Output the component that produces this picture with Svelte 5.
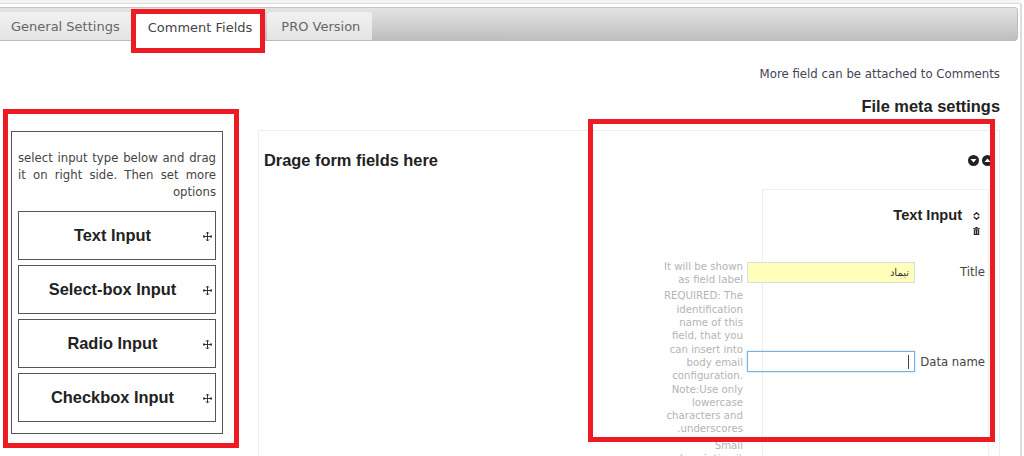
<script>
	const inputTypes = ['Text Input', 'Select-box Input', 'Radio Input', 'Checkbox Input']
</script>

<div class="page">
	<div class="frame">
		<div class="tabbar">
			<span class="tab">General Settings</span>
			<span class="tab active">Comment Fields</span>
			<span class="tab last">PRO Version</span>
		</div>

		<div class="columns">
			<div class="palette">
				<p class="palette-text">select input type below and drag it on right side. Then set more options</p>
				{#each inputTypes as type}
					<div class="type-box">
						<span class="type-name">{type}</span>
						<svg class="move" width="9" height="9" viewBox="0 0 9 9"><path d="M4.5 0v9M0 4.5h9M3 1.5L4.5 0 6 1.5M3 7.5L4.5 9 6 7.5M1.5 3L0 4.5 1.5 6M7.5 3L9 4.5 7.5 6" fill="none" stroke="#333" /></svg>
					</div>
				{/each}
			</div>

			<div class="main">
				<p class="intro">More field can be attached to Comments</p>
				<h2 class="meta-title">File meta settings</h2>

				<div class="drop">
					<div class="drop-head">
						<span class="drop-title">Drage form fields here</span>
						<span class="round-icons">
							<svg width="11" height="11" viewBox="0 0 11 11"><circle cx="5.5" cy="5.5" r="5.5" fill="#222" /><path d="M2.5 4h6L5.5 7.5z" fill="#fff" /></svg>
							<svg width="11" height="11" viewBox="0 0 11 11"><circle cx="5.5" cy="5.5" r="5.5" fill="#222" /><path d="M2.5 7h6L5.5 3.5z" fill="#fff" /></svg>
						</span>
					</div>
					<div class="field-card">
						<div class="card-head">
							<span class="card-title">Text Input</span>
							<span class="card-icons">
								<svg width="7" height="8" viewBox="0 0 7 8"><path d="M.7 3.2L3.5.8l2.8 2.4M.7 4.8l2.8 2.4 2.8-2.4" fill="none" stroke="#222" stroke-width="1.4" /></svg>
								<svg width="7" height="8" viewBox="0 0 7 8"><path d="M0 1h7v.8H0zM2.3 0h2.4v1H2.3z" fill="#222" /><path d="M.8 2.3h5.4V8H.8z" fill="#222" /><path d="M2.4 3.2v3.8M4.6 3.2v3.8" stroke="#fff" stroke-width=".7" /></svg>
							</span>
						</div>
						<div class="form-rows">
							<div class="hint">It will be shown as field label</div>
							<input class="text-field filled" dir="rtl" value="تیماد" aria-label="Title" />
							<div class="label">Title</div>

							<div class="hint">REQUIRED: The identification name of this field, that you can insert into body email configuration. Note:Use only lowercase characters and underscores.</div>
							<div class="text-field focused"><span class="caret"></span></div>
							<div class="label second">Data name</div>

							<div class="hint">Small description it</div>
						</div>
					</div>
				</div>
			</div>
		</div>
	</div>

	<!-- the red annotation boxes drawn over the screenshot -->
	<div class="mark mark-tab"></div>
	<div class="mark mark-palette"></div>
	<div class="mark mark-form"></div>
</div>

<style>
	:global(body) {
		margin: 0;
		background: #fff;
	}

	.page {
		position: relative;
		width: 1024px;
		height: 456px;
		overflow: hidden;
		font-family: 'DejaVu Sans', Verdana, sans-serif;
		font-size: 11px;
		color: #333;
	}

	.frame {
		box-sizing: border-box;
		width: 1022px;
		height: 460px;
		margin-top: 3px;
		padding-top: 3px;
		border-top: 1px solid #ddd;
		border-right: 2px solid #ddd;
		border-top-right-radius: 3px;
		box-shadow: 0 -3px 0 #f4f4f4;
		background: #fff;
	}

	.tabbar {
		box-sizing: border-box;
		display: flex;
		align-items: flex-end;
		gap: 2px;
		width: 1018px;
		height: 34px;
		border-top: 1px solid #c4c4c4;
		border-right: 1px solid #bbb;
		border-bottom: 1px solid #bbb;
		border-radius: 0 4px 4px 0;
		background: linear-gradient(to bottom, #e4e4e4, #bebebe);
	}

	.tab {
		height: 28px;
		line-height: 30px;
		padding: 0 13px;
		font-size: 13px;
		color: #666;
		background: linear-gradient(to bottom, #f1f1f1, #e4e4e4);
		border-radius: 3px 3px 0 0;
		white-space: nowrap;
	}

	.tab:first-child {
		margin-left: -2px;
	}

	.tab.active {
		background: #fff;
		color: #444;
		height: 29px;
		margin-bottom: -1px;
		line-height: 32px;
	}

	.tab.last {
		padding: 0 12px 0 14px;
	}

	.columns {
		display: grid;
		grid-template-columns: 212px 742px;
		column-gap: 35px;
		padding-left: 11px;
	}

	.palette {
		box-sizing: border-box;
		height: 303px;
		margin-top: 90px;
		padding: 0 6px;
		border: 1px solid #555;
	}

	.palette-text {
		margin: 18px 0 10px;
		font-size: 11.7px;
		line-height: 17px;
		text-align: justify;
		direction: rtl;
		color: #444;
	}

	.type-box {
		position: relative;
		box-sizing: border-box;
		height: 49px;
		margin-top: 5px;
		border: 1px solid #555;
		text-align: center;
		font-family: 'Liberation Sans', Arial, sans-serif;
		font-size: 16.4px;
		font-weight: bold;
		line-height: 47px;
		color: #222;
	}

	.type-name {
		margin-right: 9px;
	}

	.move {
		position: absolute;
		right: 3px;
		top: 20px;
	}

	.main {
		padding-top: 27px;
	}

	.intro {
		margin: 0;
		text-align: right;
		font-size: 11.75px;
		line-height: 13px;
		color: #445;
	}

	.meta-title {
		margin: 16px 0 15px;
		text-align: right;
		font-family: 'Liberation Sans', Arial, sans-serif;
		font-size: 16.4px;
		line-height: 18px;
		font-weight: bold;
		color: #222;
	}

	.drop {
		height: 400px;
		padding: 0 10px 0 5px;
		border: 1px solid #eee;
	}

	.drop-head {
		display: flex;
		justify-content: space-between;
		align-items: center;
		height: 58px;
	}

	.drop-title {
		font-family: 'Liberation Sans', Arial, sans-serif;
		font-size: 16.4px;
		font-weight: bold;
		color: #222;
	}

	.round-icons {
		display: flex;
		gap: 3px;
		margin-right: -4px;
	}

	.round-icons svg,
	.card-icons svg {
		display: block;
	}

	.field-card {
		height: 300px;
		margin-left: 498px;
		border: 1px solid #eee;
	}

	.card-head {
		box-sizing: border-box;
		display: flex;
		justify-content: flex-end;
		gap: 11px;
		height: 69.5px;
		padding: 16px 8px 0 0;
	}

	.card-title {
		font-family: 'Liberation Sans', Arial, sans-serif;
		font-size: 14.6px;
		font-weight: bold;
		line-height: 18px;
		color: #222;
	}

	.card-icons {
		display: flex;
		flex-direction: column;
		gap: 7px;
		padding-top: 6px;
	}

	.form-rows {
		display: grid;
		grid-template-columns: 85px 168px 1fr;
		column-gap: 4px;
		align-items: start;
		margin-left: -105px;
		padding-right: 3px;
	}

	.hint {
		padding-bottom: 3.4px;
		direction: rtl;
		font-size: 10.2px;
		line-height: 13.3px;
		color: #b4b4b4;
	}

	.text-field {
		position: relative;
		box-sizing: border-box;
		width: 168px;
		height: 21px;
		padding: 0 5px;
		border: 1px solid #ddd;
		font-family: 'DejaVu Sans', sans-serif;
		font-size: 10px;
	}

	.filled {
		margin: 2.5px 0 0;
		background: #ffffbb;
		color: #333;
	}

	.focused {
		margin-top: 61.5px;
		border-color: #7fb0dc;
		box-shadow: 0 0 2px #a8cdec;
	}

	.caret {
		position: absolute;
		right: 5px;
		top: 3px;
		width: 1px;
		height: 14px;
		background: #444;
	}

	.label {
		margin-top: 3.5px;
		text-align: right;
		font-size: 11.7px;
		line-height: 18px;
		color: #444;
		white-space: nowrap;
	}

	.label.second {
		margin-top: 63.5px;
	}

	.mark {
		position: absolute;
		box-sizing: border-box;
		border: 5px solid #ed1c24;
		pointer-events: none;
	}

	.mark-tab {
		left: 131px;
		top: 9px;
		width: 134px;
		height: 44px;
	}

	.mark-palette {
		left: 3px;
		top: 109px;
		width: 236px;
		height: 339px;
	}

	.mark-form {
		left: 588px;
		top: 119px;
		width: 407px;
		height: 323px;
	}
</style>
